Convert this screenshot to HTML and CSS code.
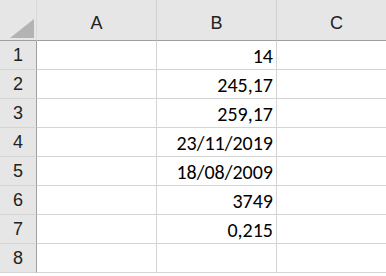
FILE: index.html
```html
<!DOCTYPE html>
<html lang="en">
<head>
  <meta charset="UTF-8" />
  <title>Sheet</title>
  <link rel="stylesheet" href="styles.css">
</head>
<body>
  <div class="sheet">
    <div class="corner"><span class="tri"></span></div>
    <div class="col-head">A</div>
    <div class="col-head">B</div>
    <div class="col-head last">C</div>

    <div class="row-head">1</div><div class="cell"></div><div class="cell num">14</div><div class="cell last"></div>
    <div class="row-head">2</div><div class="cell"></div><div class="cell num">245,17</div><div class="cell last"></div>
    <div class="row-head">3</div><div class="cell"></div><div class="cell num">259,17</div><div class="cell last"></div>
    <div class="row-head">4</div><div class="cell"></div><div class="cell num">23/11/2019</div><div class="cell last"></div>
    <div class="row-head">5</div><div class="cell"></div><div class="cell num">18/08/2009</div><div class="cell last"></div>
    <div class="row-head">6</div><div class="cell"></div><div class="cell num">3749</div><div class="cell last"></div>
    <div class="row-head">7</div><div class="cell"></div><div class="cell num">0,215</div><div class="cell last"></div>
    <div class="row-head">8</div><div class="cell"></div><div class="cell num"></div><div class="cell last"></div>
  </div>
</body>
</html>
```

FILE: styles.css
```css
body {
  margin: 0;
  background-color: #ffffff;
  overflow: hidden;
}

.sheet {
  display: grid;
  grid-template-columns: 37px 120px 120px 120px;
  grid-template-rows: 41px repeat(8, 29px);
  font-family: "Liberation Sans", Arial, sans-serif;
}

.corner,
.col-head {
  background-color: #e6e6e6;
  border-bottom: 1px solid #9f9f9f;
  border-right: 1px solid #d0d0d0;
  box-sizing: border-box;
}

.corner {
  position: relative;
  border-right: 1px solid #d9d9d9;
}

.tri {
  position: absolute;
  left: 10px;
  top: 19px;
  width: 0;
  height: 0;
  border-left: 24px solid transparent;
  border-bottom: 19px solid #b3b3b3;
}

.col-head {
  display: flex;
  align-items: flex-end;
  justify-content: center;
  padding-bottom: 6px;
  font-size: 18px;
  color: #222222;
}

.row-head {
  background-color: #e6e6e6;
  border-right: 1px solid #9f9f9f;
  border-bottom: 1px solid #d4d4d4;
  box-sizing: border-box;
  display: flex;
  align-items: center;
  justify-content: center;
  font-size: 18px;
  color: #222222;
}

.cell {
  border-right: 1px solid #d4d4d4;
  border-bottom: 1px solid #d4d4d4;
  box-sizing: border-box;
}

.num {
  display: flex;
  align-items: center;
  justify-content: flex-end;
  padding-top: 2px;
  padding-right: 3px;
  font-family: Carlito, "Liberation Sans Narrow", "Liberation Sans", sans-serif;
  font-size: 20px;
  color: #000000;
}
```
